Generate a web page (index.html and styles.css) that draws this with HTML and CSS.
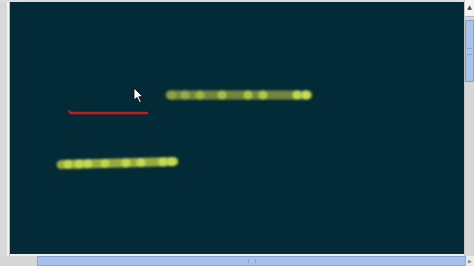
FILE: index.html
```html
<!DOCTYPE html>
<html lang="en">
  <head>
    <meta charset="UTF-8" />
    <meta name="viewport" content="width=device-width, initial-scale=1.0" />
    <title>Canvas</title>
    <link rel="stylesheet" href="styles.css">
  </head>
  <body>
    <div class="b-window">
      <div class="b-window__main">
        <div class="b-gutter"></div>
        <div class="b-canvas">
          <svg class="b-canvas__svg" width="454" height="252" viewBox="0 0 454 252">
            <defs>
              <filter id="soft" x="-10%" y="-50%" width="120%" height="200%">
                <feGaussianBlur stdDeviation="0.8" />
              </filter>
            </defs>
            <!-- top stroke -->
            <g filter="url(#soft)">
              <line x1="160" y1="93" x2="298" y2="93" stroke="#73853a" stroke-width="9" stroke-linecap="round" />
              <circle cx="162" cy="93" r="4.5" fill="#8ea042" />
              <circle cx="175" cy="93" r="4.5" fill="#98aa46" />
              <circle cx="190" cy="93" r="4.5" fill="#a0b348" />
              <circle cx="212" cy="93" r="4.5" fill="#a8bb4a" />
              <circle cx="238" cy="93" r="4.5" fill="#aec14c" />
              <circle cx="253" cy="93" r="4.5" fill="#b2c54e" />
              <circle cx="287" cy="93" r="4.5" fill="#c2d653" />
              <circle cx="296" cy="93" r="4.5" fill="#c8dc55" />
            </g>
            <!-- red stroke -->
            <path d="M59.5 109.5 Q60 111 61 111 L137 111" fill="none" stroke="#c8191c" stroke-width="2.6" stroke-linecap="round" />
            <!-- bottom stroke -->
            <g filter="url(#soft)">
              <line x1="51" y1="162.5" x2="164" y2="159.5" stroke="#98ab3e" stroke-width="9" stroke-linecap="round" />
              <circle cx="58" cy="162.3" r="4.5" fill="#c2d650" />
              <circle cx="69" cy="162" r="4.5" fill="#c4d852" />
              <circle cx="78" cy="161.8" r="4.5" fill="#c4d852" />
              <circle cx="95" cy="161.4" r="4.5" fill="#c0d450" />
              <circle cx="116" cy="161" r="4.5" fill="#c2d651" />
              <circle cx="131" cy="160.6" r="4.5" fill="#c4d852" />
              <circle cx="153" cy="160" r="4.5" fill="#c6da53" />
              <circle cx="162" cy="159.8" r="4.5" fill="#c6da53" />
            </g>
            <!-- cursor -->
            <path d="M124 86 L124 98 L127 95.5 L129.5 100.5 L131.3 99.6 L128.8 94.8 L132.6 94.6 Z" fill="#ffffff" stroke="#000000" stroke-width="0.8" />
          </svg>
        </div>
        <div class="b-vscroll">
          <div class="b-vscroll__arrow">&#9650;</div>
          <div class="b-vscroll__thumb"><span class="b-vscroll__grip"></span></div>
          <div class="b-vscroll__track"></div>
        </div>
      </div>
      <div class="b-hscroll">
        <div class="b-hscroll__track"></div>
        <div class="b-hscroll__thumb"><span class="b-hscroll__grip"></span></div>
        <div class="b-hscroll__arrow">&#9654;</div>
      </div>
    </div>
  </body>
</html>
```

FILE: styles.css
```css
html, body
{
  margin: 0;
  padding: 0;
  background: #d9d9d9;
  overflow: hidden;
}

.b-window
{
  width: 474px;
  height: 266px;
  display: flex;
  flex-direction: column;
}

.b-window__main
{
  display: flex;
  height: 256px;
  padding-top: 2px;
  box-sizing: border-box;
  background: #dedede;
}

.b-gutter
{
  width: 10px;
  background: linear-gradient(to right, #d8d8d8 0, #d8d8d8 7px, #f2f2f2 7px, #f2f2f2 9px, #b9b9b9 9px);
}

.b-canvas
{
  width: 454px;
  height: 252px;
  background: #022a37;
  border-bottom: 2px solid #f0f0f0;
}

.b-canvas__svg
{
  display: block;
}

.b-vscroll
{
  width: 10px;
  margin-top: -2px;
  display: flex;
  flex-direction: column;
  background: #d6d6d6;
  border-left: 1px solid #c4c4c4;
  box-sizing: border-box;
}

.b-vscroll__arrow
{
  height: 16px;
  background: #f4f4f4;
  font-family: "DejaVu Sans", sans-serif;
  font-size: 6px;
  line-height: 14px;
  text-align: center;
  color: #444;
  border-bottom: 1px solid #bbb;
}

.b-vscroll__thumb
{
  height: 60px;
  margin-top: 3px;
  background: #a9c5ea;
  border: 1px solid #7f9fcf;
  display: flex;
  align-items: center;
  justify-content: center;
}

.b-vscroll__grip
{
  width: 5px;
  height: 5px;
  border-top: 1px solid #8aa6d0;
  border-bottom: 1px solid #8aa6d0;
}

.b-vscroll__track
{
  flex: 1;
}

.b-hscroll
{
  height: 10px;
  display: flex;
  background: #d6d6d6;
}

.b-hscroll__track
{
  width: 37px;
}

.b-hscroll__thumb
{
  width: 429px;
  background: #a6c2ea;
  border: 1px solid #86a6d6;
  box-sizing: border-box;
  display: flex;
  align-items: center;
  justify-content: center;
}

.b-hscroll__grip
{
  width: 6px;
  height: 4px;
  border-left: 1px solid #8aa6d0;
  border-right: 1px solid #8aa6d0;
}

.b-hscroll__arrow
{
  width: 8px;
  background: #ececec;
  font-family: "DejaVu Sans", sans-serif;
  font-size: 5px;
  line-height: 10px;
  text-align: center;
  color: #888;
}
```
